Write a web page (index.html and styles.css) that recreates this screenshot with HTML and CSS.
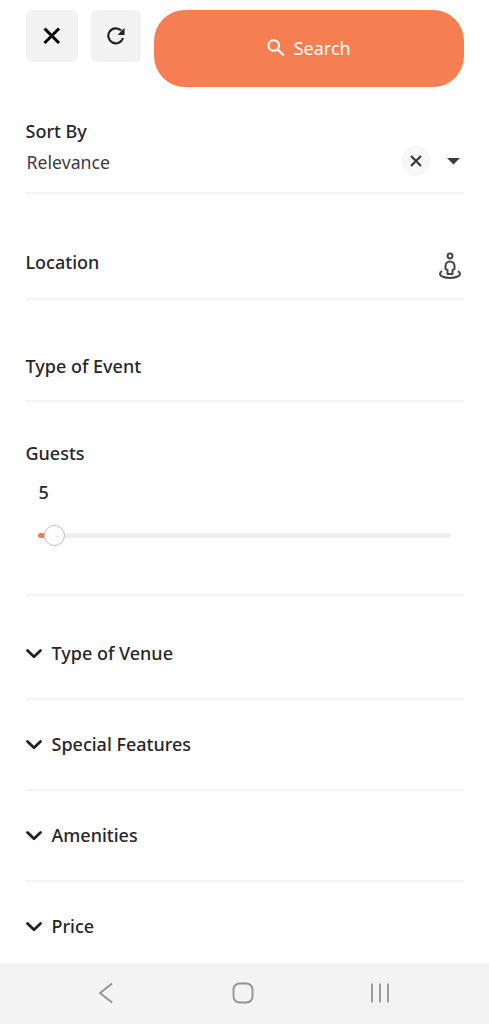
FILE: index.html
```html
<!DOCTYPE html>
<html lang="en">
<head>
<meta charset="utf-8">
<title>Search filters</title>
<link rel="stylesheet" href="styles.css">
</head>
<body>
<main class="filters">
  <header class="toolbar">
    <button class="tool close" aria-label="Close"><svg width="18" height="18" viewBox="0 0 18 18"><path d="M1.500 1.500 16 16M16 1.500 1.500 16" fill="none" stroke="#000" stroke-width="3"/></svg></button>
    <button class="tool reset" aria-label="Reset"><svg width="18" height="18" viewBox="0 0 18 18"><path d="M14.200 3.600A7.500 7.500 0 1 0 16 11" fill="none" stroke="#222" stroke-width="2.200"/><path d="M17.500.8V8H10.600Z" fill="#222"/></svg></button>
    <button class="search"><svg width="18" height="18" viewBox="0 0 18 18"><circle cx="6.700" cy="6.500" r="5.300" fill="none" stroke="#fff" stroke-width="2"/><path d="m10.700 10.500 6 6" stroke="#fff" stroke-width="2.300"/></svg><span>Search</span></button>
  </header>

  <section class="group sort">
    <div class="label">Sort By</div>
    <div class="select">
      <span class="value">Relevance</span>
      <span class="clear"><svg width="12" height="12" viewBox="0 0 12 12"><path d="m1 1 10 10M11 1 1 11" stroke="#333" stroke-width="2"/></svg></span>
      <svg class="caret" width="13" height="7" viewBox="0 0 13 7"><path d="M0 0H13L6.500 6.500Z" fill="#3c3c3c"/></svg>
    </div>
  </section>

  <section class="group location">
    <div class="label">Location</div>
    <svg class="pegman" width="24" height="28" viewBox="0 0 24 28" fill="none" stroke="#444" stroke-width="2">
      <circle cx="12" cy="4" r="2.400"/>
      <path d="M9.500 22V18.200L7.500 17V14a4.500 4.500 0 0 1 9 0V17L14.500 18.200V22Z" stroke-linejoin="round"/>
      <path d="M4.200 19.200C2.500 19.900 2 20.700 2 21.700c0 2.500 4.500 4.300 10 4.300s10-1.800 10-4.300c0-1-.5-1.800-2.200-2.500"/>
    </svg>
  </section>

  <section class="group event"><div class="label">Type of Event</div></section>

  <section class="group guests">
    <div class="label">Guests</div>
    <div class="count">5</div>
    <div class="track"><div class="fill"></div><div class="knob"></div></div>
  </section>

  <section class="group fold venue"><svg class="chevron" width="16" height="10" viewBox="0 0 16 10"><path d="m1.500 1.500 6.500 6.300 6.500-6.300"/></svg><span>Type of Venue</span></section>
  <section class="group fold"><svg class="chevron" width="16" height="10" viewBox="0 0 16 10"><path d="m1.500 1.500 6.500 6.300 6.500-6.300"/></svg><span>Special Features</span></section>
  <section class="group fold"><svg class="chevron" width="16" height="10" viewBox="0 0 16 10"><path d="m1.500 1.500 6.500 6.300 6.500-6.300"/></svg><span>Amenities</span></section>
  <section class="group fold price"><svg class="chevron" width="16" height="10" viewBox="0 0 16 10"><path d="m1.500 1.500 6.500 6.300 6.500-6.300"/></svg><span>Price</span></section>
</main>
<nav class="navbar">
  <svg width="22" height="22" viewBox="0 0 22 22"><path d="M17 1.500 5 11 17 20.500"/></svg>
  <svg width="22" height="22" viewBox="0 0 22 22"><rect x="1.500" y="1.500" width="19" height="19" rx="6"/></svg>
  <svg width="22" height="22" viewBox="0 0 22 22"><path d="M3 1.500V20.500M11 1.500V20.500M19 1.500V20.500"/></svg>
</nav>
</body>
</html>
```
FILE: styles.css
```css
* { box-sizing: border-box; }
body {
  margin: 0;
  height: 1024px;
  display: flex;
  flex-direction: column;
  overflow: hidden;
  background: #fff;
  color: #262628;
  font: 500 18px/24px "Noto Sans", "Open Sans", sans-serif;
}
svg { display: block; flex: none; }
button { border: 0; padding: 0; font: inherit; display: flex; align-items: center; justify-content: center; }
.filters { height: 963px; padding: 10px 25.500px 0; }
.toolbar { display: flex; align-items: flex-start; height: 77px; }
.tool { height: 52px; border-radius: 6px; background: #f2f2f2; }
.close { width: 52.500px; margin-right: 13px; }
.reset { width: 50px; margin-right: 13px; }
.search { width: 310px; height: 77px; padding-bottom: 1px; border-radius: 31px; background: #f57f53; color: #fff; gap: 9px; font-weight: 400; }
.group { border-bottom: 2px solid #f3f3f3; }
.sort { height: 107px; padding-top: 32px; }
.select { display: flex; align-items: center; height: 35px; padding: 1px 3.500px 0 0; }
.value { margin: 2px 0 0 1px; font-size: 17.700px; font-weight: 400; color: #3c3c3c; }
.clear { display: flex; align-items: center; justify-content: center; width: 30px; height: 30px; margin: 0 16px 0 auto; border-radius: 50%; background: #f7f7f7; }
.location { display: flex; justify-content: space-between; height: 106px; padding-top: 56px; }
.pegman { margin: 2px 1.500px 0 0; }
.event { height: 102px; padding-top: 54px; }
.guests { height: 194px; padding-top: 39px; }
.count { margin: 15px 0 0 13px; }
.track { display: flex; align-items: center; height: 5px; margin: 29px 12.500px 0; border-radius: 3px; background: #eee; }
.fill { width: 6px; height: 5px; border-radius: 3px 0 0 3px; background: #ed7d5b; }
.knob { width: 21px; height: 21px; flex: none; border: 1px solid #bbb; border-radius: 50%; background: #fff; }
.fold { display: flex; height: 91px; padding-top: 32px; gap: 10px; }
.venue { height: 104px; padding-top: 45px; }
.price { height: 81px; border: 0; }
.chevron { margin-top: 8px; fill: none; stroke: #202020; stroke-width: 2.700; stroke-linecap: round; stroke-linejoin: round; }
.navbar { display: flex; align-items: center; justify-content: space-between; height: 61px; padding: 0 98px 2px 95px; background: #f3f3f3; }
.navbar svg { fill: none; stroke: #929292; stroke-width: 1.800; }
```
